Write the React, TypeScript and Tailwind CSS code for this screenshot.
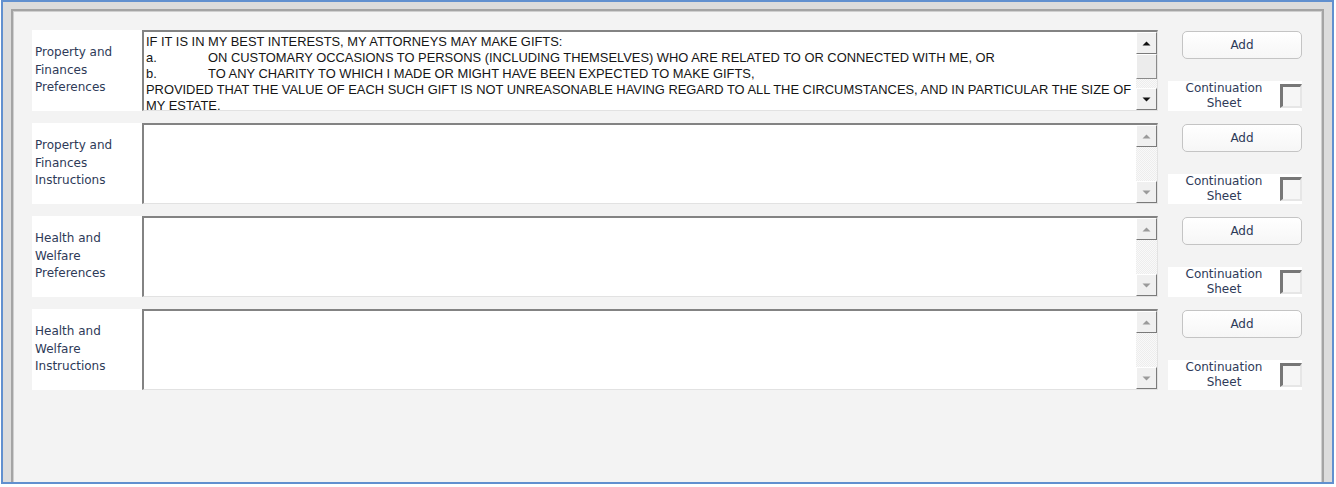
import React from 'react';

const rows = [
  { label: ['Property and', 'Finances', 'Preferences'], filled: true },
  { label: ['Property and', 'Finances', 'Instructions'], filled: false },
  { label: ['Health and', 'Welfare', 'Preferences'], filled: false },
  { label: ['Health and', 'Welfare', 'Instructions'], filled: false },
];

function Arrow({ up, disabled }: { up: boolean; disabled: boolean }) {
  return (
    <svg width="9" height="5" viewBox="0 0 9 5">
      <path
        d={up ? 'M0.5 4.5 L4.5 0.5 L8.5 4.5 Z' : 'M0.5 0.5 L4.5 4.5 L8.5 0.5 Z'}
        fill={disabled ? '#9a9a9a' : '#111'}
      />
    </svg>
  );
}

function ScrollButton({ up, disabled }: { up: boolean; disabled: boolean }) {
  return (
    <div className="h-[22px] w-full border-t border-l border-t-white border-l-white border-b border-r border-b-[#7a7a7a] border-r-[#7a7a7a] bg-[#f0f0f0] flex items-center justify-center">
      <Arrow up={up} disabled={disabled} />
    </div>
  );
}

function Scrollbar({ thumb }: { thumb: boolean }) {
  return (
    <div className="w-[21px] h-full flex flex-col bg-[#f4f4f4] bg-[conic-gradient(#ededed_25%,#f9f9f9_0_50%,#ededed_0_75%,#f9f9f9_0)] bg-size-[2px_2px]">
      <ScrollButton up disabled={!thumb} />
      {thumb && (
        <div className="h-[25px] w-full border-t border-l border-t-white border-l-white border-b border-r border-b-[#8a8a8a] border-r-[#8a8a8a] bg-[#ececec]" />
      )}
      <div className="flex-1" />
      <ScrollButton up={false} disabled={!thumb} />
    </div>
  );
}

function TabLine({ mark, text }: { mark: string; text: string }) {
  return (
    <div className="flex">
      <span className="w-[62px] shrink-0">{mark}</span>
      <span>{text}</span>
    </div>
  );
}

function Content() {
  return (
    <div className="px-[2px] pt-[2px] text-[12.9px] leading-[16px] text-[#151515] whitespace-nowrap overflow-hidden h-full [font-family:'Liberation_Sans',Arial,sans-serif]">
      <div>IF IT IS IN MY BEST INTERESTS, MY ATTORNEYS MAY MAKE GIFTS:</div>
      <TabLine mark="a." text="ON CUSTOMARY OCCASIONS TO PERSONS (INCLUDING THEMSELVES) WHO ARE RELATED TO OR CONNECTED WITH ME, OR" />
      <TabLine mark="b." text="TO ANY CHARITY TO WHICH I MADE OR MIGHT HAVE BEEN EXPECTED TO MAKE GIFTS," />
      <div>PROVIDED THAT THE VALUE OF EACH SUCH GIFT IS NOT UNREASONABLE HAVING REGARD TO ALL THE CIRCUMSTANCES, AND IN PARTICULAR THE SIZE OF</div>
      <div>MY ESTATE.</div>
    </div>
  );
}

export default function App() {
  return (
    <div className="w-[1336px] h-[487px] bg-white [font-family:'DejaVu_Sans',Verdana,sans-serif]">
      <div className="ml-[1px] w-[1333px] h-[484px] border-2 border-[#6190cf] bg-[#dcdcdc] pt-[7px] px-[8px]">
        <div className="h-full border-t-2 border-l-2 border-r-2 border-[#a4a4a4]">
          <div className="h-full border-t border-l border-r border-[#cfcfcf] bg-[#f3f3f3] pl-[18px] pt-[18px] flex flex-col gap-[12px]">
            {rows.map((row, i) => (
              <div key={i} className="flex h-[81px]">
                <div className="w-[110px] h-full bg-white flex flex-col justify-center pl-[3px] text-[12px] leading-[17.5px] text-[#2e3a58]">
                  {row.label.map((l) => (
                    <div key={l}>{l}</div>
                  ))}
                </div>
                <div className="w-[1016px] h-full flex border-t-2 border-l-2 border-t-[#838383] border-l-[#838383] border-b border-r border-b-[#e2e2e2] border-r-[#e2e2e2] bg-white">
                  <div className="flex-1 h-full min-w-0">{row.filled && <Content />}</div>
                  <Scrollbar thumb={row.filled} />
                </div>
                <div className="ml-[10px] w-[134px] h-full flex flex-col justify-between">
                  <button className="ml-[14px] mt-[1px] w-[120px] h-[28px] rounded-[5px] border border-[#c4c4c4] bg-[linear-gradient(#ffffff,#f6f6f6)] text-[12px] text-[#2e3a58]">
                    Add
                  </button>
                  <div className="h-[30px] bg-white flex items-center">
                    <div className="w-[112px] text-center text-[12px] leading-[15px] text-[#2e3a58]">
                      <div>Continuation</div>
                      <div>Sheet</div>
                    </div>
                    <div className="w-[22px] h-[24px] border-t-[3px] border-l-[3px] border-t-[#777777] border-l-[#777777] border-b-2 border-r-2 border-b-[#e6e6e6] border-r-[#e6e6e6] bg-[#f6f6f6]" />
                  </div>
                </div>
              </div>
            ))}
          </div>
        </div>
      </div>
    </div>
  );
}
